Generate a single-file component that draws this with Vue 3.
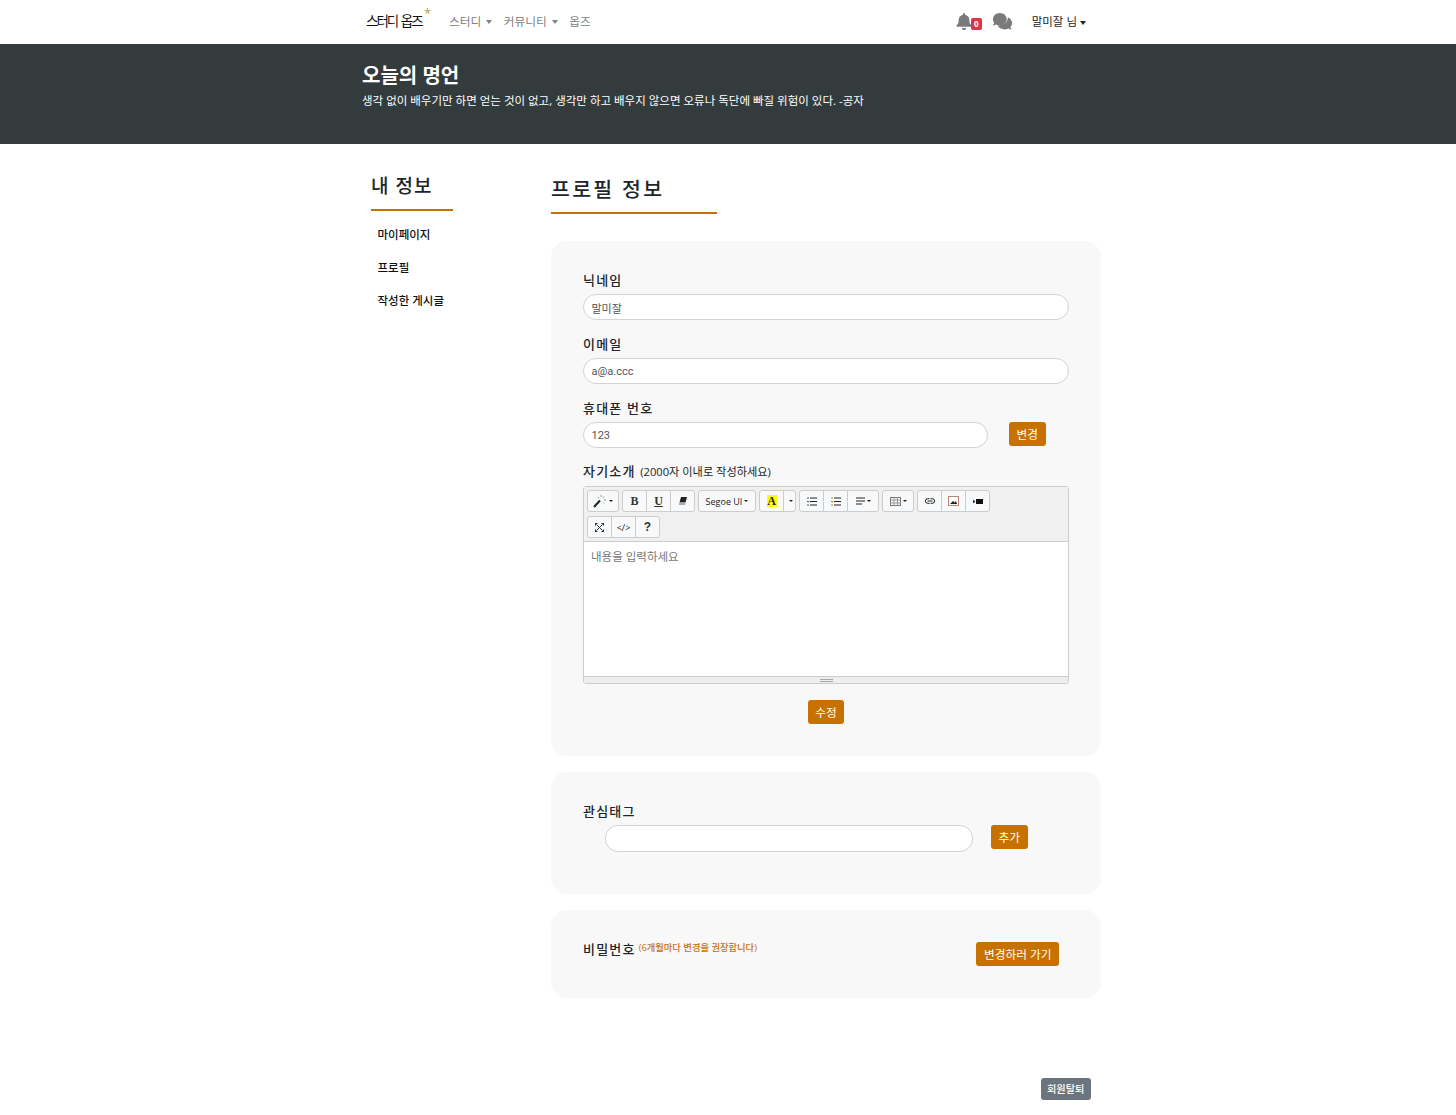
<script setup>
const navItems = [
  { label: "스터디", caret: true },
  { label: "커뮤니티", caret: true },
  { label: "옵즈", caret: false }
]
const sideLinks = ["마이페이지", "프로필", "작성한 게시글"]
</script>

<template>
  <div class="page">
    <nav class="navbar">
      <div class="wrap nav-inner">
        <a class="logo"><span>스터디 옵즈</span><span class="logo-star">*</span></a>
        <a v-for="item in navItems" :key="item.label" class="nav-link">
          {{ item.label }}<i v-if="item.caret" class="caret"></i>
        </a>
        <div class="nav-right">
          <span class="bell">
            <svg width="16" height="17" viewBox="0 0 448 512"><path fill="#7a7a7a" d="M224 512c35 0 64-29 64-64H160c0 35 29 64 64 64zm215-150c-19-21-55-52-55-154 0-78-54-140-128-155V32a32 32 0 1 0-64 0v21C118 68 64 130 64 208c0 102-36 133-55 154-6 6-9 14-9 22 0 16 13 32 32 32h384c19 0 32-16 32-32 0-8-3-16-9-22z"/></svg>
            <b class="badge">0</b>
          </span>
          <svg class="chat" width="21" height="17" viewBox="0 0 576 512"><path fill="#7a7a7a" d="M416 192C416 86 323 0 208 0S0 86 0 192c0 41 14 79 38 110-13 30-35 53-35 54-3 3-4 8-2 12s5 6 9 6c37 0 67-12 89-26 33 16 70 26 109 26 115 0 208-86 208-192zm122 220c24-31 38-69 38-110 0-80-54-148-130-177 1 6 2 11 2 17 0 132-126 240-280 240-11 0-21-1-32-2 37 67 120 114 216 114 39 0 76-10 109-26 22 14 52 26 89 26 4 0 7-2 9-6s1-9-2-12c0 0-22-24-35-54z"/></svg>
          <a class="user">말미잘 님<i class="caret dark"></i></a>
        </div>
      </div>
    </nav>

    <header class="hero">
      <div class="wrap hero-inner">
        <h2>오늘의 명언</h2>
        <p>생각 없이 배우기만 하면 얻는 것이 없고, 생각만 하고 배우지 않으면 오류나 독단에 빠질 위험이 있다. -공자</p>
      </div>
    </header>

    <main class="wrap content">
      <aside class="side">
        <h3>내 정보</h3>
        <ul>
          <li v-for="link in sideLinks" :key="link">{{ link }}</li>
        </ul>
      </aside>

      <section class="main">
        <h3 class="main-title">프로필 정보</h3>

        <div class="card card-profile">
          <label>닉네임</label>
          <input class="field" value="말미잘" />
          <label>이메일</label>
          <input class="field" value="a@a.ccc" />
          <label>휴대폰 번호</label>
          <div class="phone-row">
            <input class="field" value="123" />
            <button class="btn">변경</button>
          </div>
          <label class="intro">자기소개 <small>(2000자 이내로 작성하세요)</small></label>

          <div class="editor">
            <div class="toolbar">
              <div class="tb-row">
                <div class="tb-group">
                  <button class="tb wide">
                    <svg width="14" height="14" viewBox="0 0 14 14"><path d="M1 13 7 6.500" stroke="#222" stroke-width="2"/><path d="M8 1v2M11 2.500 10 4M13 6h-2M11 9.500 10 8.500M5 3l1 1" stroke="#999" stroke-width="1"/></svg>
                    <i class="mini-caret"></i>
                  </button>
                </div>
                <div class="tb-group">
                  <button class="tb glyph">B</button>
                  <button class="tb glyph under">U</button>
                  <button class="tb">
                    <svg width="9" height="8" viewBox="0 0 9 8"><path d="M3 0h6L7.500 5.500H1.500z" fill="#222"/><path d="M1.500 5.500h6L7 8H.7z" fill="#aaa"/></svg>
                  </button>
                </div>
                <div class="tb-group">
                  <button class="tb font">Segoe UI<i class="mini-caret"></i></button>
                </div>
                <div class="tb-group">
                  <button class="tb"><span class="color-a">A</span></button>
                  <button class="tb thin"><i class="mini-caret"></i></button>
                </div>
                <div class="tb-group">
                  <button class="tb">
                    <svg width="10" height="9" viewBox="0 0 10 9"><path d="M3 1h7M3 4.500h7M3 8h7" stroke="#222"/><path d="M0 1h2M0 4.500h2M0 8h2" stroke="#555"/></svg>
                  </button>
                  <button class="tb">
                    <svg width="10" height="9" viewBox="0 0 10 9"><path d="M3 1h7M3 4.500h7M3 8h7" stroke="#222"/><path d="M0 1h2M0 4.500h2M0 8h2" stroke="#c80"/></svg>
                  </button>
                  <button class="tb align">
                    <svg width="9" height="8" viewBox="0 0 9 8"><path d="M0 1h9M0 4h9M0 7h6" stroke="#222" stroke-width="1.200"/></svg>
                    <i class="mini-caret"></i>
                  </button>
                </div>
                <div class="tb-group">
                  <button class="tb wide">
                    <svg width="11" height="9" viewBox="0 0 11 9"><rect x=".5" y=".5" width="10" height="8" fill="none" stroke="#777"/><path d="M.5 3h10M.5 6h10M4 .5v8M7.500 .5v8" stroke="#999"/></svg>
                    <i class="mini-caret"></i>
                  </button>
                </div>
                <div class="tb-group">
                  <button class="tb">
                    <svg width="10" height="6" viewBox="0 0 10 6"><path d="M4.500 .7H2.700a2.300 2.300 0 0 0 0 4.600h1.800M5.500 .7h1.800a2.300 2.300 0 0 1 0 4.600H5.500M2.500 3h5" fill="none" stroke="#222"/></svg>
                  </button>
                  <button class="tb">
                    <svg width="11" height="10" viewBox="0 0 11 10"><rect x=".5" y=".5" width="10" height="9" fill="#fff" stroke="#b87"/><path d="M2 8 5 5l1.500 1.500L8 5l1 3z" fill="#222"/></svg>
                  </button>
                  <button class="tb">
                    <svg width="10" height="5" viewBox="0 0 10 5"><rect x="3" width="7" height="5" fill="#111"/><path d="M0 .5l2.500 2L0 4.500z" fill="#333"/></svg>
                  </button>
                </div>
              </div>
              <div class="tb-row">
                <div class="tb-group">
                  <button class="tb">
                    <svg width="9" height="9" viewBox="0 0 9 9"><path d="M2 2l5 5M7 2 2 7" stroke="#333"/><path d="M0 0h3L0 3zM9 0H6l3 3zM0 9h3L0 6zM9 9H6l3-3z" fill="#333"/></svg>
                  </button>
                  <button class="tb code">&lt;/&gt;</button>
                  <button class="tb glyph help">?</button>
                </div>
              </div>
            </div>
            <div class="editable">내용을 입력하세요</div>
            <div class="statusbar"><span></span><span></span></div>
          </div>

          <div class="submit-row"><button class="btn">수정</button></div>
        </div>

        <div class="card card-tag">
          <label>관심태그</label>
          <div class="tag-row">
            <input class="field" />
            <button class="btn">추가</button>
          </div>
        </div>

        <div class="card card-pass">
          <div class="pass-label">
            <label>비밀번호</label>
            <small>(6개월마다 변경을 권장합니다)</small>
          </div>
          <button class="btn">변경하러 가기</button>
        </div>

        <div class="leave-row"><button class="btn leave">회원탈퇴</button></div>
      </section>
    </main>
  </div>
</template>

<style>
  body {
    background: #fff;
  }
</style>

<style scoped>
  .page {
    font-family: "Open Sans", "Noto Sans CJK KR", sans-serif;
    color: #212529;
    font-size: 12px;
  }

  .wrap {
    width: 754px;
    margin: 0 auto;
  }

  .navbar {
    height: 44px;
  }

  .nav-inner {
    display: flex;
    align-items: center;
    height: 44px;
    padding: 0 0 2px 15px;
    box-sizing: border-box;
  }

  .logo {
    position: relative;
    width: 83px;
    margin-bottom: 3px;
    font-size: 13.500px;
    letter-spacing: -2px;
    word-spacing: 2px;
    color: #111;
  }

  .logo-star {
    position: absolute;
    left: 58px;
    top: -6px;
    font-size: 13px;
    letter-spacing: 0;
    color: #b5a642;
  }

  .nav-link {
    margin-right: 11.500px;
    margin-bottom: 2px;
    color: #808080;
    font-size: 11.700px;
  }

  .caret {
    display: inline-block;
    margin-left: 5px;
    vertical-align: middle;
    border-top: 4px solid #808080;
    border-left: 3.500px solid transparent;
    border-right: 3.500px solid transparent;
  }

  .caret.dark {
    margin-left: 3px;
    border-top-color: #212529;
  }

  .nav-right {
    display: flex;
    align-items: center;
    margin-left: auto;
    padding-right: 19px;
  }

  .bell {
    position: relative;
    display: flex;
    width: 36px;
  }

  .badge {
    position: absolute;
    left: 15px;
    top: 5px;
    width: 11px;
    height: 12px;
    border-radius: 2px;
    background: #dc3545;
    color: #fff;
    font-size: 8px;
    line-height: 12px;
    text-align: center;
  }

  .chat {
    margin-right: 19px;
  }

  .user {
    font-size: 11.500px;
    color: #212529;
  }

  .hero {
    height: 100px;
    background: #343b3d;
    color: #fff;
  }

  .hero-inner {
    padding: 19px 11px 0;
    box-sizing: border-box;
  }

  .hero h2 {
    margin: 0;
    font-size: 20px;
    line-height: 26px;
    font-weight: 700;
  }

  .hero p {
    margin: 3px 0 0;
    font-size: 11.500px;
    line-height: 18px;
  }

  .content {
    display: flex;
  }

  .side {
    width: 200px;
    padding-left: 20px;
    box-sizing: border-box;
  }

  .side h3 {
    width: 82px;
    margin: 28px 0 0;
    padding-bottom: 9px;
    border-bottom: 2px solid #c77100;
    font-size: 19px;
    line-height: 28px;
    font-weight: 500;
    letter-spacing: 1px;
  }

  .side ul {
    margin: 7px 0 0;
    padding: 0 0 0 6.500px;
    list-style: none;
  }

  .side li {
    height: 33px;
    font-size: 11.500px;
    font-weight: 500;
    line-height: 33px;
    color: #111;
  }

  .main {
    width: 550px;
  }

  .main-title {
    display: inline-block;
    width: 166px;
    margin: 31px 0 27px;
    padding-bottom: 9px;
    border-bottom: 2px solid #c77100;
    font-size: 20.500px;
    line-height: 28px;
    font-weight: 500;
    letter-spacing: 2.300px;
  }

  .card {
    margin-bottom: 16px;
    padding: 0 32px;
    border-radius: 16px;
    background: #f8f8f8;
  }

  .card-profile {
    height: 515px;
    padding-top: 30px;
    box-sizing: border-box;
  }

  label {
    display: block;
    height: 23px;
    font-size: 13px;
    font-weight: 500;
    line-height: 18px;
    letter-spacing: 1.200px;
  }

  .field {
    display: block;
    width: 100%;
    height: 26px;
    margin-bottom: 15px;
    padding: 1px 7.500px 0;
    border: 1px solid #ced4da;
    border-radius: 13px;
    box-sizing: border-box;
    background: #fff;
    color: #555;
    font-family: Roboto, "Noto Sans CJK KR", sans-serif;
    font-size: 11px;
    outline: none;
  }

  .phone-row {
    display: flex;
    align-items: flex-start;
  }

  .phone-row .field {
    width: 405px;
    margin-right: 21px;
  }

  .btn {
    height: 24px;
    padding: 0 7.500px 1px;
    border: 0;
    border-radius: 3px;
    background: #c77100;
    color: #fff;
    font-family: inherit;
    font-size: 11.700px;
  }

  .intro {
    line-height: 16px;
  }

  .intro small {
    font-size: 11.200px;
    font-weight: 400;
    letter-spacing: 0;
  }

  .editor {
    height: 198px;
    border: 1px solid #ccc;
    border-radius: 3px;
    box-sizing: border-box;
    background: #fff;
  }

  .toolbar {
    display: flex;
    flex-direction: column;
    gap: 4px;
    height: 55px;
    padding: 3px 3px 0;
    box-sizing: border-box;
    border-bottom: 1px solid #ccc;
    background: #f0f0f0;
  }

  .tb-row {
    display: flex;
    gap: 3px;
  }

  .tb-group {
    display: flex;
  }

  .tb {
    display: flex;
    align-items: center;
    justify-content: center;
    width: 25px;
    height: 22px;
    margin-left: -1px;
    padding: 0;
    border: 1px solid #ccc;
    background: #f8f9fa;
    color: #222;
    font-family: inherit;
  }

  .tb-group .tb:first-child {
    margin-left: 0;
    border-radius: 3px 0 0 3px;
  }

  .tb-group .tb:last-child {
    border-radius: 0 3px 3px 0;
  }

  .tb-group .tb:only-child {
    border-radius: 3px;
  }

  .tb.wide {
    width: 32px;
  }

  .tb.align {
    width: 32px;
  }

  .tb.thin {
    width: 13px;
  }

  .tb.font {
    width: 58px;
    font-size: 9px;
  }

  .tb.glyph {
    font-family: "Liberation Serif", serif;
    font-size: 12px;
    font-weight: 700;
    color: #333;
  }

  .tb.under {
    text-decoration: underline;
  }

  .tb.help {
    font-family: "Liberation Sans", sans-serif;
    font-size: 12px;
  }

  .tb.code {
    font-size: 9px;
  }

  .color-a {
    width: 10px;
    background: #ff0;
    font-family: "Liberation Serif", serif;
    font-size: 12px;
    font-weight: 700;
    line-height: 12px;
  }

  .mini-caret {
    display: inline-block;
    margin-left: 2px;
    border-top: 2.500px solid #222;
    border-left: 2.500px solid transparent;
    border-right: 2.500px solid transparent;
  }

  .editable {
    height: 134px;
    padding: 6px 7px;
    box-sizing: border-box;
    color: #777;
    font-size: 11.500px;
    line-height: 18px;
  }

  .statusbar {
    display: flex;
    flex-direction: column;
    align-items: center;
    justify-content: center;
    gap: 1px;
    height: 7px;
    box-sizing: border-box;
    border-top: 1px solid #ccc;
    background: #eee;
  }

  .statusbar span {
    width: 13px;
    height: 1px;
    background: #a9a9a9;
  }

  .submit-row {
    display: flex;
    justify-content: center;
    margin-top: 16px;
  }

  .card-tag {
    height: 122px;
    padding-top: 30px;
    box-sizing: border-box;
  }

  .tag-row {
    display: flex;
    align-items: flex-start;
    padding-left: 22px;
  }

  .tag-row .field {
    width: 368px;
    height: 27px;
    margin-right: 18px;
  }

  .card-pass {
    display: flex;
    justify-content: space-between;
    align-items: flex-start;
    height: 88px;
    padding: 30px 42px 0 32px;
    box-sizing: border-box;
  }

  .card-pass .btn {
    margin-top: 2px;
  }

  .pass-label {
    display: flex;
    gap: 3px;
  }

  .pass-label small {
    font-size: 9.300px;
    font-weight: 500;
    color: #c77100;
  }

  .leave-row {
    display: flex;
    justify-content: flex-end;
    margin-top: 80px;
    padding-right: 10px;
  }

  .btn.leave {
    height: 22px;
    padding: 0 6.500px 1px;
    background: #6c757d;
    font-size: 10.200px;
    font-weight: 500;
  }
</style>
